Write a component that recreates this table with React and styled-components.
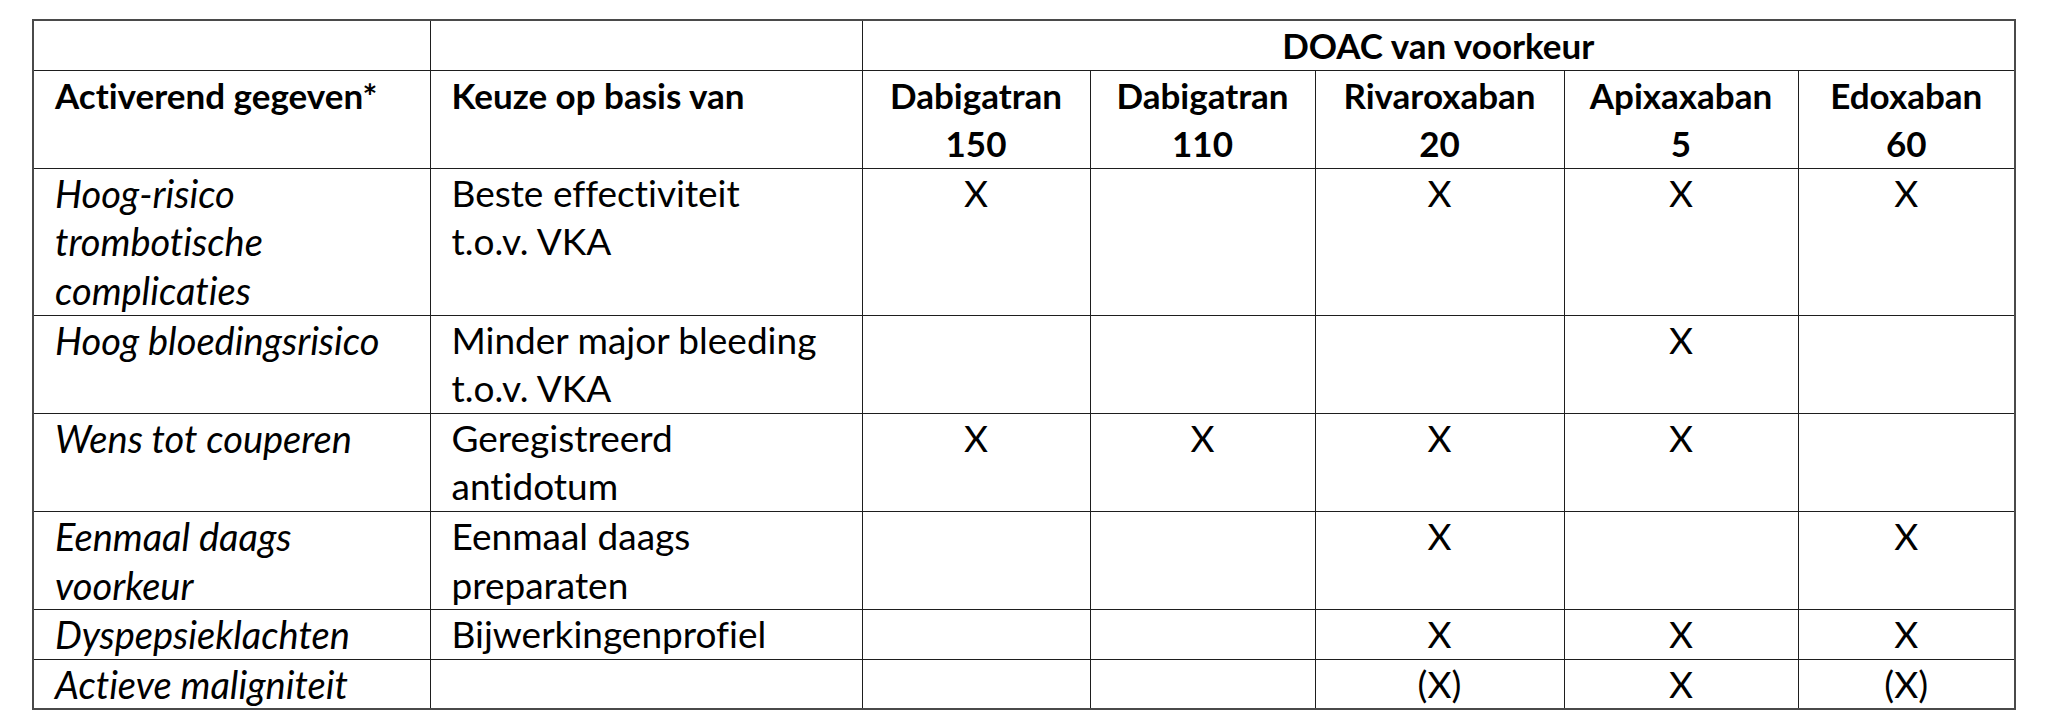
import styled, { createGlobalStyle } from 'styled-components';

const GlobalStyle = createGlobalStyle`
  html, body {
    margin: 0;
    padding: 0;
    background: #ffffff;
  }
  body {
    font-family: 'Lato', 'Noto Sans', sans-serif;
    color: #000;
    font-variant-ligatures: none;
  }
`;

const drugs = [
  ['Dabigatran', '150'],
  ['Dabigatran', '110'],
  ['Rivaroxaban', '20'],
  ['Apixaxaban', '5'],
  ['Edoxaban', '60'],
];

const rows = [
  {
    factor: ['Hoog-risico', 'trombotische', 'complicaties'],
    basis: ['Beste effectiviteit', 't.o.v. VKA'],
    marks: ['X', '', 'X', 'X', 'X'],
  },
  {
    factor: ['Hoog bloedingsrisico'],
    basis: ['Minder major bleeding', 't.o.v. VKA'],
    marks: ['', '', '', 'X', ''],
  },
  {
    factor: ['Wens tot couperen'],
    basis: ['Geregistreerd', 'antidotum'],
    marks: ['X', 'X', 'X', 'X', ''],
  },
  {
    factor: ['Eenmaal daags', 'voorkeur'],
    basis: ['Eenmaal daags', 'preparaten'],
    marks: ['', '', 'X', '', 'X'],
  },
  {
    factor: ['Dyspepsieklachten'],
    basis: ['Bijwerkingenprofiel'],
    marks: ['', '', 'X', 'X', 'X'],
  },
  {
    factor: ['Actieve maligniteit'],
    basis: [],
    marks: ['', '', '(X)', 'X', '(X)'],
  },
];

const colWidths = [397, 432, 228, 225, 249, 234, 217];

const Lines = ({ lines }) =>
  lines.map((l, i) => (
    <span key={i}>
      {i > 0 && <br />}
      {l}
    </span>
  ));

const DoacTable = () => {
  return (
    <Page>
      <GlobalStyle />
      <Table>
        <colgroup>
          {colWidths.map((w, i) => (
            <col key={i} style={{ width: w }} />
          ))}
        </colgroup>
        <thead>
          <tr>
            <HeadCell />
            <HeadCell />
            <HeadCell colSpan={5} $center>
              DOAC van voorkeur
            </HeadCell>
          </tr>
          <tr>
            <HeadCell>Activerend gegeven*</HeadCell>
            <HeadCell>Keuze op basis van</HeadCell>
            {drugs.map((d, i) => (
              <HeadCell key={i} $center>
                <Lines lines={d} />
              </HeadCell>
            ))}
          </tr>
        </thead>
        <tbody>
          {rows.map((r, i) => (
            <tr key={i}>
              <Cell $italic>
                <Lines lines={r.factor} />
              </Cell>
              <Cell>
                <Lines lines={r.basis} />
              </Cell>
              {r.marks.map((m, j) => (
                <Cell key={j} $center>
                  {m}
                </Cell>
              ))}
            </tr>
          ))}
        </tbody>
      </Table>
    </Page>
  );
};

const Page = styled.div`
  padding: 19px 0 0 32px;
`;

const Table = styled.table`
  table-layout: fixed;
  width: 1982px;
  border-collapse: collapse;
  border: 2px solid #4a4a4a;
`;

const cellBase = `
  border: 1px solid #1e1e1e;
  padding: 0 10px 0 21px;
  vertical-align: top;
  line-height: 48.6px;
  white-space: nowrap;
  overflow: hidden;
`;

const HeadCell = styled.th`
  ${cellBase}
  font-size: 35px;
  font-weight: 700;
  text-align: ${(p) => (p.$center ? 'center' : 'left')};
  ${(p) => p.$center && 'padding: 0;'}
`;

const Cell = styled.td`
  ${cellBase}
  font-size: ${(p) => (p.$italic ? '38px' : '37px')};
  font-weight: 400;
  font-style: ${(p) => (p.$italic ? 'italic' : 'normal')};
  text-align: ${(p) => (p.$center ? 'center' : 'left')};
  ${(p) => p.$center && 'padding: 0;'}
`;

export default DoacTable;
